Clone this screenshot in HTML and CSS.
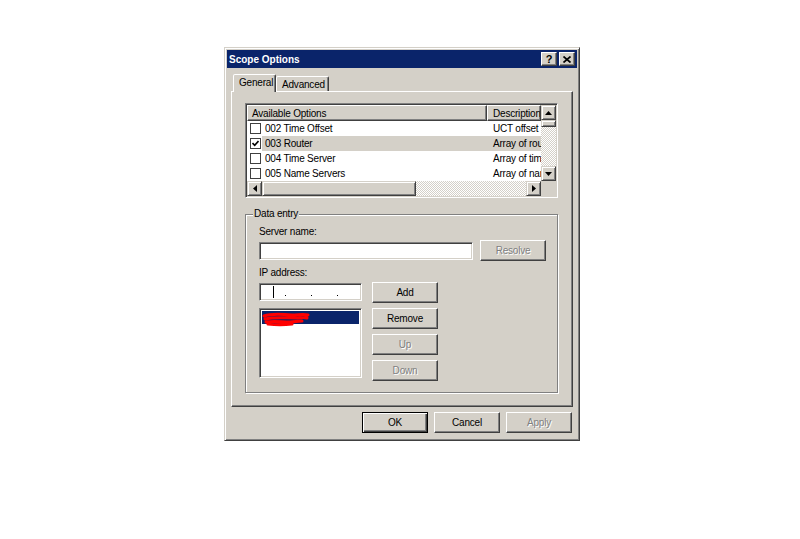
FILE: index.html
```html
<!DOCTYPE html>
<html>
<head>
<meta charset="utf-8">
<title>Scope Options</title>
<link rel="stylesheet" href="styles.css">
</head>
<body>
<div class="window">
  <div class="titlebar">
    <span class="title">Scope Options</span>
    <div class="tbtns">
      <span class="tbtn help">?</span>
      <span class="tbtn close"><svg width="8" height="7" viewBox="0 0 8 7"><path d="M0.5 0.5 L7.5 6.5 M7.5 0.5 L0.5 6.5" stroke="#000" stroke-width="1.7" fill="none"/></svg></span>
    </div>
  </div>
  <div class="content">
    <div class="tabs">
      <div class="tab active tab-general">General</div>
      <div class="tab tab-adv">Advanced</div>
    </div>
    <div class="panel">
      <div class="listview">
        <div class="lv-main">
          <div class="lv-header">
            <div class="hcell c1">Available Options</div>
            <div class="hcell c2">Description</div>
          </div>
          <div class="row">
            <span class="chk"></span>
            <div class="rowbody"><span class="name">002 Time Offset</span><span class="desc">UCT offset in seconds</span></div>
          </div>
          <div class="row sel">
            <span class="chk"><svg width="7" height="7" viewBox="0 0 7 7"><path d="M0.5 3 L2.7 5.3 L6.5 1" stroke="#000" stroke-width="1.6" fill="none"/></svg></span>
            <div class="rowbody"><span class="name">003 Router</span><span class="desc">Array of router addresses</span></div>
          </div>
          <div class="row">
            <span class="chk"></span>
            <div class="rowbody"><span class="name">004 Time Server</span><span class="desc">Array of time server addresses</span></div>
          </div>
          <div class="row">
            <span class="chk"></span>
            <div class="rowbody"><span class="name">005 Name Servers</span><span class="desc">Array of name servers</span></div>
          </div>
        </div>
        <div class="vscroll">
          <span class="sbtn"><svg width="7" height="4" viewBox="0 0 7 4"><path d="M3.5 0 L7 4 L0 4 Z" fill="#000"/></svg></span>
          <span class="thumb-v"></span>
          <span class="track"></span>
          <span class="sbtn"><svg width="7" height="4" viewBox="0 0 7 4"><path d="M0 0 L7 0 L3.5 4 Z" fill="#000"/></svg></span>
        </div>
        <div class="hscroll">
          <span class="sbtn"><svg width="4" height="7" viewBox="0 0 4 7"><path d="M0 3.5 L4 0 L4 7 Z" fill="#000"/></svg></span>
          <span class="thumb-h"></span>
          <span class="track"></span>
          <span class="sbtn"><svg width="4" height="7" viewBox="0 0 4 7"><path d="M4 3.5 L0 0 L0 7 Z" fill="#000"/></svg></span>
        </div>
        <div class="corner"></div>
      </div>

      <div class="group">
        <span class="legend">Data entry</span>
        <div class="lbl">Server name:</div>
        <div class="srow">
          <div class="field server"></div>
          <div class="btn disabled">Resolve</div>
        </div>
        <div class="lbl iplbl">IP address:</div>
        <div class="iprow">
          <div class="ipcol">
            <div class="field ipfield">
              <span class="caret"></span>
              <span class="dot d1"></span>
              <span class="dot"></span>
              <span class="dot"></span>
            </div>
            <div class="field listbox">
              <div class="lb-sel"></div>
              <svg class="scribble" width="48" height="16" viewBox="0 0 48 16"><path d="M2 4 C10 1 20 2 30 3 C36 3 42 2 46 3 M3 7 C12 5 22 6 34 6 C38 6 42 5 45 6 M4 10 C12 9 20 10 28 10 C32 10 36 9 40 9 M6 12 C14 13 22 13 30 12" stroke="#ff0000" stroke-width="3" fill="none" stroke-linecap="round"/></svg>
            </div>
          </div>
          <div class="btncol">
            <div class="btn">Add</div>
            <div class="btn">Remove</div>
            <div class="btn disabled">Up</div>
            <div class="btn disabled">Down</div>
          </div>
        </div>
      </div>
    </div>
    <div class="footer">
      <div class="btn default">OK</div>
      <div class="btn">Cancel</div>
      <div class="btn disabled">Apply</div>
    </div>
  </div>
</div>
</body>
</html>
```
FILE: styles.css
```css
body {
  margin: 0;
  background: #fff;
  font-family: "Liberation Sans", Arial, sans-serif;
  font-size: 10px;
  letter-spacing: -0.2px;
  color: #000;
}

.window {
  box-sizing: border-box;
  width: 356px;
  height: 394px;
  margin: 47px 0 0 224px;
  background: #d4d0c8;
  border: 1px solid;
  border-color: #d4d0c8 #404040 #404040 #d4d0c8;
  box-shadow: inset 1px 1px #fff, inset -1px -1px #808080;
  padding: 2px;
}

.titlebar {
  height: 18px;
  background: #0a246a;
  color: #fff;
  display: flex;
  align-items: center;
  justify-content: space-between;
  padding: 0 2px 0 2px;
  font-weight: bold;
  font-size: 10px;
  letter-spacing: 0;
}

.tbtns {
  display: flex;
  gap: 2px;
}

.tbtn {
  width: 16px;
  height: 14px;
  box-sizing: border-box;
  background: #d4d0c8;
  border: 1px solid;
  border-color: #fff #404040 #404040 #fff;
  box-shadow: inset -1px -1px #808080;
  display: flex;
  align-items: center;
  justify-content: center;
  color: #000;
  font-weight: bold;
  font-size: 11px;
  line-height: 1;
}

.content {
  padding: 6px 4px 0 4px;
}

.tabs {
  display: flex;
  height: 17px;
  align-items: flex-end;
  padding-left: 2px;
}

.tab {
  box-sizing: border-box;
  height: 15px;
  border: 1px solid;
  border-bottom: none;
  border-color: #fff #404040 transparent #fff;
  border-radius: 2px 2px 0 0;
  box-shadow: inset -1px 0 #808080;
  padding: 0 0 0 5px;
  display: flex;
  align-items: center;
  background: #d4d0c8;
}

.tab-general {
  width: 43px;
}

.tab-adv {
  width: 53px;
  padding-left: 5px;
}

.tab.active {
  height: 18px;
  margin-bottom: -1px;
  position: relative;
  z-index: 1;
  padding-bottom: 3px;
}

.panel {
  box-sizing: border-box;
  height: 316px;
  border: 1px solid;
  border-color: #fff #404040 #404040 #fff;
  box-shadow: inset -1px -1px #808080;
  padding: 11px 13px 0 13px;
}

/* list view */
.listview {
  box-sizing: border-box;
  width: 313px;
  height: 95px;
  border: 1px solid;
  border-color: #808080 #fff #fff #808080;
  box-shadow: inset 1px 1px #404040, inset -1px -1px #d4d0c8;
  padding: 1px;
  display: grid;
  grid-template-columns: 294px 15px;
  grid-template-rows: 76px 15px;
}

.lv-main {
  background: #fff;
  overflow: hidden;
}

.lv-header {
  display: flex;
  height: 16px;
}

.hcell {
  box-sizing: border-box;
  height: 16px;
  border: 1px solid;
  border-color: #fff #404040 #404040 #fff;
  box-shadow: inset -1px -1px #808080;
  padding-left: 4px;
  display: flex;
  align-items: center;
  background: #d4d0c8;
  white-space: nowrap;
  overflow: hidden;
  flex: none;
}

.c1 { width: 240px; }
.c2 { width: 54px; padding-left: 5px; }

.row {
  display: flex;
  height: 15px;
  align-items: center;
}

.chk {
  box-sizing: border-box;
  width: 11px;
  height: 11px;
  margin: 0 1px 0 3px;
  border: 1px solid #404040;
  background: #fff;
  display: flex;
  align-items: center;
  justify-content: center;
  flex: none;
}

.rowbody {
  display: flex;
  height: 15px;
  align-items: center;
  width: 279px;
  flex: none;
}

.row.sel .rowbody {
  background: #d4d0c8;
}

.name {
  box-sizing: border-box;
  width: 225px;
  padding-left: 3px;
  white-space: nowrap;
  flex: none;
}

.desc {
  box-sizing: border-box;
  width: 54px;
  padding-left: 6px;
  white-space: nowrap;
  overflow: hidden;
  flex: none;
}

.vscroll {
  display: flex;
  flex-direction: column;
}

.hscroll {
  display: flex;
}

.sbtn {
  box-sizing: border-box;
  width: 15px;
  height: 15px;
  flex: none;
  background: #d4d0c8;
  border: 1px solid;
  border-color: #d4d0c8 #404040 #404040 #d4d0c8;
  box-shadow: inset 1px 1px #fff, inset -1px -1px #808080;
  display: flex;
  align-items: center;
  justify-content: center;
}

.thumb-v,
.thumb-h {
  box-sizing: border-box;
  flex: none;
  background: #d4d0c8;
  border: 1px solid;
  border-color: #d4d0c8 #404040 #404040 #d4d0c8;
  box-shadow: inset 1px 1px #fff, inset -1px -1px #808080;
}

.thumb-v { height: 7px; width: 15px; }
.thumb-h { width: 154px; height: 15px; }

.track {
  flex: 1;
  background-color: #fff;
  background-image: repeating-conic-gradient(#d4d0c8 0 25%, #fff 0 50%);
  background-size: 2px 2px;
}

.corner {
  background: #d4d0c8;
}

/* group box */
.group {
  position: relative;
  box-sizing: border-box;
  width: 313px;
  height: 179px;
  margin-top: 16px;
  border: 1px solid #808080;
  box-shadow: inset 1px 1px #fff, 1px 1px #fff;
  padding: 11px 0 0 13px;
}

.legend {
  position: absolute;
  top: -7px;
  left: 7px;
  padding: 0 1px;
  background: #d4d0c8;
  line-height: 12px;
}

.lbl {
  height: 12px;
  line-height: 12px;
}

.srow {
  display: flex;
  align-items: center;
  gap: 7px;
  margin-top: 2px;
}

.field {
  box-sizing: border-box;
  background: #fff;
  border: 1px solid;
  border-color: #808080 #fff #fff #808080;
  box-shadow: inset 1px 1px #404040, inset -1px -1px #d4d0c8;
}

.server {
  width: 214px;
  height: 18px;
}

.btn {
  box-sizing: border-box;
  width: 66px;
  height: 21px;
  flex: none;
  background: #d4d0c8;
  border: 1px solid;
  border-color: #fff #404040 #404040 #fff;
  box-shadow: inset -1px -1px #808080;
  display: flex;
  align-items: center;
  justify-content: center;
}

.btn.disabled {
  color: #808080;
  text-shadow: 1px 1px #fff;
}

.btn.default {
  border: 1px solid #000;
  box-shadow: inset 1px 1px #fff, inset -1px -1px #404040, inset -2px -2px #808080;
}

.iplbl {
  margin-top: 6px;
}

.iprow {
  display: flex;
  margin-top: 3px;
}

.ipcol {
  padding-top: 1px;
  width: 103px;
}

.ipfield {
  width: 103px;
  height: 18px;
  display: flex;
  align-items: center;
  padding-left: 13px;
}

.caret {
  width: 1px;
  height: 12px;
  background: #000;
  flex: none;
}

.dot {
  width: 1px;
  height: 1px;
  background: #000;
  margin-left: 25px;
  margin-top: 7px;
  flex: none;
}

.dot.d1 {
  margin-left: 11px;
}

.listbox {
  position: relative;
  width: 103px;
  height: 70px;
  margin-top: 7px;
  padding: 2px;
}

.lb-sel {
  height: 13px;
  background: #0a246a;
}

.scribble {
  position: absolute;
  left: 2px;
  top: 3px;
}

.btncol {
  display: flex;
  flex-direction: column;
  gap: 5px;
  margin-left: 10px;
}

.footer {
  display: flex;
  justify-content: flex-end;
  gap: 6px;
  margin-top: 5px;
  padding-right: 1px;
}
```
